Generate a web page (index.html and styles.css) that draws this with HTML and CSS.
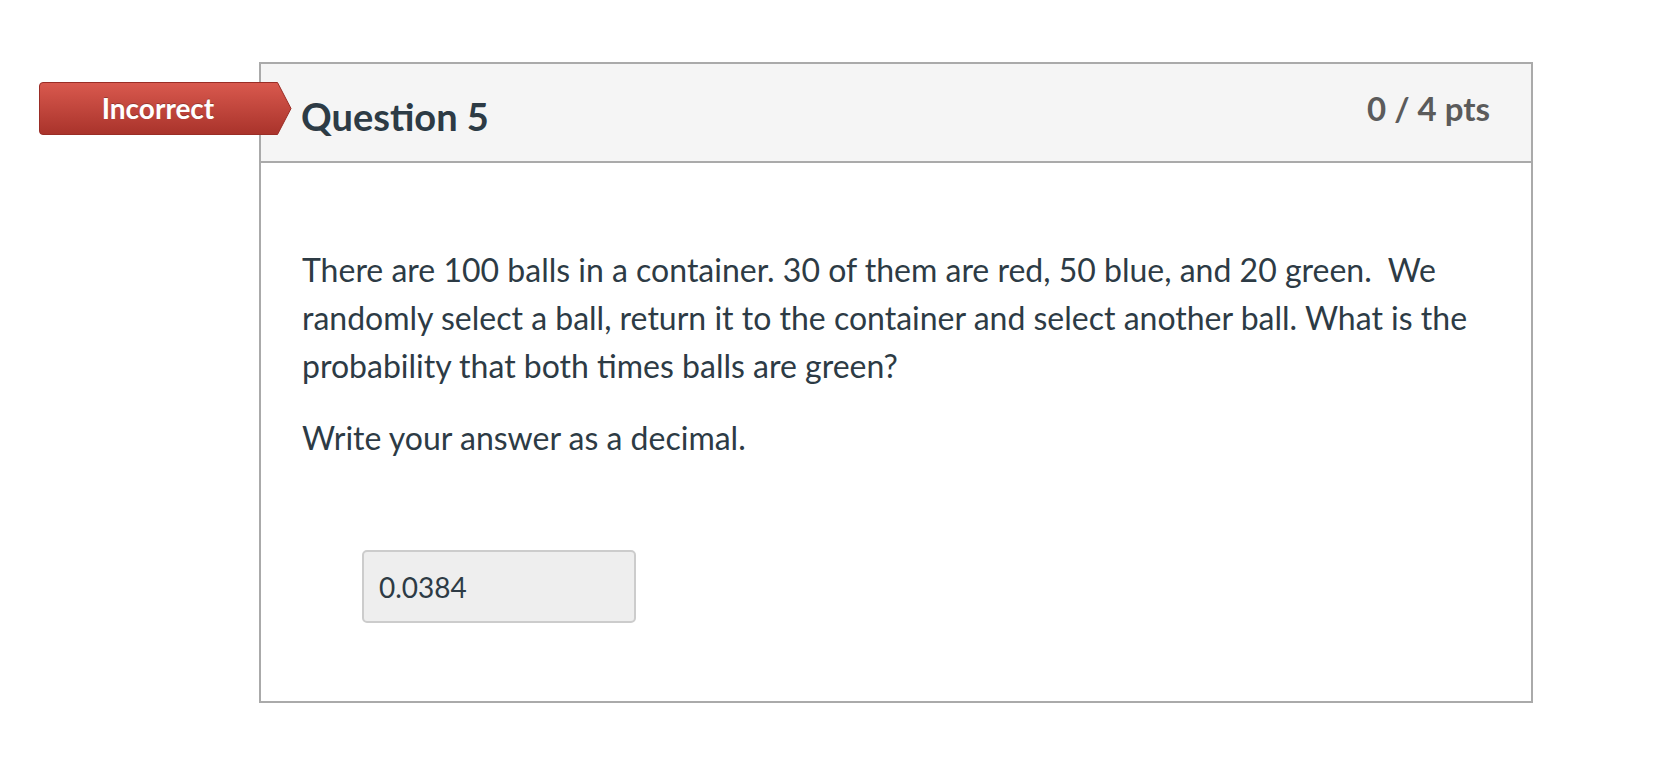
FILE: index.html
```html
<!DOCTYPE html>
<html lang="en">
<head>
<meta charset="utf-8">
<title>Question 5</title>
<link rel="stylesheet" href="styles.css">
</head>
<body>
<div class="quiz">
  <div class="answer-arrow">
    <svg class="arrow-shape" width="253" height="53" viewBox="0 0 253 53" aria-hidden="true">
      <defs>
        <linearGradient id="redg" x1="0" y1="0" x2="0" y2="1">
          <stop offset="0" stop-color="#d9594e"/>
          <stop offset="1" stop-color="#a9332b"/>
        </linearGradient>
      </defs>
      <path d="M4 0.5 H238.5 L252 26.5 L238.5 52.5 H4 Q0.5 52.5 0.5 49 V4 Q0.5 0.5 4 0.5 Z" fill="url(#redg)" stroke="#9a2d26" stroke-width="1"/>
    </svg>
    <span class="arrow-label">Incorrect</span>
  </div>
  <div class="question">
    <div class="q-header">
      <span class="q-name">Question 5</span>
      <span class="q-points">0 / 4 pts</span>
    </div>
    <div class="q-body">
      <p>There are 100 balls in a container. 30 of them are red, 50 blue, and 20 green.&nbsp; We randomly select a ball, return it to the container and select another ball. What is the probability that both times balls are green?</p>
      <p>Write your answer as a decimal.</p>
      <div class="answer-row">
        <div class="answer-input">0.0384</div>
      </div>
    </div>
  </div>
</div>
</body>
</html>
```

FILE: styles.css
```css
html, body {
  margin: 0;
  padding: 0;
  background: #ffffff;
}

body {
  font-family: Lato, "Noto Sans", "Liberation Sans", sans-serif;
  color: #2d3b45;
}

.quiz {
  position: relative;
  padding: 62px 0 0 259px;
}

.answer-arrow {
  position: absolute;
  left: 39px;
  top: 82px;
  width: 253px;
  height: 53px;
}

.arrow-shape {
  position: absolute;
  left: 0;
  top: 0;
  display: block;
}

.arrow-label {
  position: relative;
  display: block;
  width: 238px;
  height: 53px;
  line-height: 53px;
  text-align: center;
  color: #ffffff;
  font-size: 28px;
  font-weight: 700;
  text-shadow: 0 -1px 0 rgba(0, 0, 0, 0.25);
}

.question {
  width: 1270px;
  border: 2px solid #aaaaaa;
}

.q-header {
  display: flex;
  justify-content: space-between;
  align-items: flex-start;
  background: #f5f5f5;
  border-bottom: 2px solid #aaaaaa;
  padding: 25px 41px 18px 40px;
  height: 54px;
}

.q-name {
  font-size: 38px;
  line-height: 54px;
  font-weight: 700;
  color: #2d3b45;
}

.q-points {
  font-size: 33px;
  line-height: 1.2;
  font-weight: 700;
  color: #5b5b5b;
}

.q-body {
  padding: 83px 40px 78px 41px;
}

.q-body p {
  margin: 0 0 24px 0;
  font-size: 32px;
  line-height: 48px;
}

.q-body p:last-of-type {
  margin-bottom: 0;
}

.answer-row {
  display: flex;
  padding: 88px 0 0 60px;
}

.answer-input {
  box-sizing: border-box;
  width: 274px;
  height: 73px;
  display: flex;
  align-items: center;
  padding: 0 15px;
  background: #eeeeee;
  border: 2px solid #cccccc;
  border-radius: 5px;
  font-size: 28px;
  color: #2d3b45;
}
```
